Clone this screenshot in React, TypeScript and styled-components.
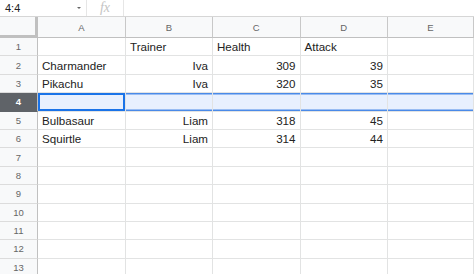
import React from "react";
import styled, { createGlobalStyle, css } from "styled-components";

const Global = createGlobalStyle`
  html, body { margin: 0; padding: 0; background: #fff; }
  body { font-family: "Liberation Sans", Arial, sans-serif; overflow: hidden; }
`;

const Page = styled.div`
  width: 474px;
  height: 274px;
  overflow: hidden;
  display: flex;
  flex-direction: column;
`;

const FormulaBar = styled.div`
  height: 16px;
  display: flex;
  align-items: center;
  border-bottom: 1px solid #d6d6d6;
  flex-shrink: 0;
`;

const NameBox = styled.div`
  width: 87px;
  height: 100%;
  display: flex;
  align-items: center;
  justify-content: space-between;
  padding: 0 4px 0 5px;
  box-sizing: border-box;
  border-right: 1px solid #e6e6e6;
  font-size: 11px;
  color: #222;
`;

const Caret = styled.span`
  width: 0;
  height: 0;
  border-left: 2px solid transparent;
  border-right: 2px solid transparent;
  border-top: 2px solid #666;
  margin-right: 1px;
`;

const Fx = styled.div`
  width: 36px;
  height: 100%;
  display: flex;
  align-items: center;
  justify-content: center;
  border-right: 1px solid #e6e6e6;
  font-family: "Liberation Serif", serif;
  font-style: italic;
  font-size: 14px;
  color: #c4c4c4;
`;

const Grid = styled.div`
  display: grid;
  grid-template-columns: 38px 88px 87px 87.5px 87.5px 1fr;
  grid-template-rows: 21px repeat(13, 18.4px);
`;

const Corner = styled.div`
  background: #f8f9fa;
  border-right: 3px solid #c0c0c0;
  border-bottom: 3px solid #c0c0c0;
  box-sizing: border-box;
`;

const ColHead = styled.div`
  background: #f8f9fa;
  border-right: 1px solid #c8c8c8;
  border-bottom: 1px solid #c0c0c0;
  box-sizing: border-box;
  display: flex;
  align-items: center;
  justify-content: center;
  font-size: 9.5px;
  color: #666;
`;

const RowHead = styled.div<{ $active?: boolean }>`
  background: #f8f9fa;
  border-right: 1px solid #c0c0c0;
  border-bottom: 1px solid #dcdcdc;
  box-sizing: border-box;
  display: flex;
  align-items: center;
  justify-content: center;
  font-size: 9.5px;
  color: #666;
  ${(p) =>
    p.$active &&
    css`
      background: #5f6368;
      color: #fff;
      font-weight: bold;
      border-bottom-color: #5f6368;
    `}
`;

const Cell = styled.div<{ $num?: boolean; $row?: boolean; $sel?: boolean }>`
  border-right: 1px solid #e2e3e3;
  border-bottom: 1px solid #e2e3e3;
  box-sizing: border-box;
  display: flex;
  align-items: center;
  justify-content: ${(p) => (p.$num ? "flex-end" : "flex-start")};
  padding: 0 4px 0 4px;
  font-size: 11.6px;
  color: #222;
  white-space: nowrap;
  overflow: hidden;
  ${(p) =>
    p.$row &&
    css`
      background: #e8f0fe;
      box-shadow: inset 0 1.5px 0 #4a8ae8, inset 0 -1.5px 0 #4a8ae8;
    `}
  ${(p) =>
    p.$sel &&
    css`
      box-shadow: inset 0 0 0 2px #1a73e8;
    `}
`;

type Row = [string, string, string, string];
const rows: Row[] = [
  ["", "Trainer", "Health", "Attack"],
  ["Charmander", "Iva", "309", "39"],
  ["Pikachu", "Iva", "320", "35"],
  ["", "", "", ""],
  ["Bulbasaur", "Liam", "318", "45"],
  ["Squirtle", "Liam", "314", "44"],
  ["", "", "", ""],
  ["", "", "", ""],
  ["", "", "", ""],
  ["", "", "", ""],
  ["", "", "", ""],
  ["", "", "", ""],
  ["", "", "", ""],
];

const cols = ["A", "B", "C", "D", "E"];

export default function App() {
  return (
    <Page>
      <Global />
      <FormulaBar>
        <NameBox>
          <span>4:4</span>
          <Caret />
        </NameBox>
        <Fx>fx</Fx>
      </FormulaBar>
      <Grid>
        <Corner />
        {cols.map((c) => (
          <ColHead key={c}>{c}</ColHead>
        ))}
        {rows.map((r, i) => {
          const active = i === 3;
          const header = i === 0;
          return (
            <React.Fragment key={i}>
              <RowHead $active={active}>{i + 1}</RowHead>
              {r.map((v, j) => (
                <Cell
                  key={j}
                  $num={!header && j > 0}
                  $row={active}
                  $sel={active && j === 0}
                >
                  {v}
                </Cell>
              ))}
              <Cell $row={active} />
            </React.Fragment>
          );
        })}
      </Grid>
    </Page>
  );
}
